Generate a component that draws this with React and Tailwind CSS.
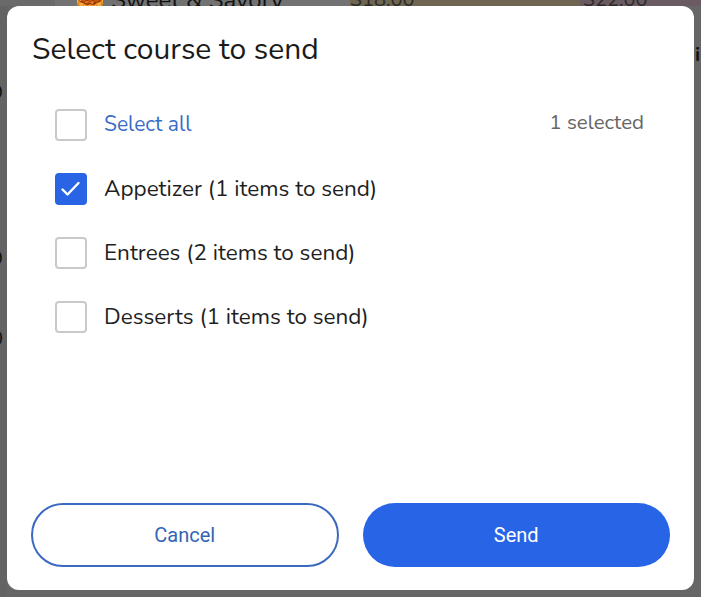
import React from "react";

const font = { fontFamily: "Nunito, 'Noto Sans', Lato, sans-serif" };

function Box({ checked }) {
  if (checked) {
    return (
      <div className="w-8 h-8 rounded-[4px] bg-[#2864e4] flex items-center justify-center shrink-0">
        <svg width="32" height="32" viewBox="0 0 32 32" fill="none">
          <path d="M7.5 16.5l5 5 11-11.5" stroke="white" strokeWidth="2.4" strokeLinecap="round" strokeLinejoin="round" />
        </svg>
      </div>
    );
  }
  return <div className="w-8 h-8 rounded-[4px] border-2 border-[#c9c9c9] bg-white shrink-0" />;
}

export default function App() {
  const rows = [
    { label: "Appetizer (1 items to send)", checked: true },
    { label: "Entrees (2 items to send)", checked: false },
    { label: "Desserts (1 items to send)", checked: false },
  ];
  const btnFont = { fontFamily: "'Liberation Sans Narrow', 'Roboto', sans-serif" };
  return (
    <div className="relative w-[701px] h-[597px] overflow-hidden bg-[#666666]" style={font}>
      {/* dimmed background app */}
      <div className="flex h-[6px] overflow-visible">
        <div className="w-[55px] bg-[#6a6a6a]" />
        <div className="w-[295px] bg-[#727272] relative">
          <span className="absolute left-[20px] -top-[18px] text-[24px] text-[#111] whitespace-nowrap">🥮 Sweet &amp; Savory</span>
        </div>
        <div className="w-[230px] bg-[#6e6650] relative">
          <span className="absolute left-[0px] -top-[15px] text-[20px] text-[#2a2a2a]">$18.00</span>
        </div>
        <div className="flex-1 bg-[#6a5a62] relative">
          <span className="absolute left-[3px] -top-[15px] text-[20px] text-[#2a2a2a]">$22.00</span>
        </div>
      </div>
      <div className="absolute left-0 top-[6px] bottom-0 w-[7px] bg-[#636363]">
        <span className="absolute -left-[9px] top-[72px] text-[20px] text-[#111]">9</span>
        <span className="absolute -left-[9px] top-[238px] text-[20px] text-[#111]">9</span>
        <span className="absolute -left-[9px] top-[318px] text-[20px] text-[#111]">0</span>
      </div>
      <div className="absolute right-0 top-[6px] bottom-0 w-[7px] bg-[#666666]">
        <span className="absolute left-[1px] top-[34px] text-[20px] font-bold text-[#111]">i</span>
      </div>

      {/* modal */}
      <div className="absolute left-[7px] top-[6px] w-[687px] h-[584px] bg-white rounded-[12px] flex flex-col px-6 pt-[24px] pb-[23px]">
        <h1 className="text-[30px] leading-[40px] text-[#1a1a1a] ml-[1px]">Select course to send</h1>
        <div className="mt-[23px] flex flex-col pl-[24px] pr-[26px]">
          <div className="flex items-center h-[64px]">
            <Box checked={false} />
            <span className="ml-[17px] text-[21px] text-[#3a6cc6]">Select all</span>
            <span className="ml-auto text-[20.5px] text-[#666] -mt-[5px]">1 selected</span>
          </div>
          {rows.map((r) => (
            <div key={r.label} className="flex items-center h-[64px]">
              <Box checked={r.checked} />
              <span className="ml-[17px] text-[22.5px] text-[#1f1f1f]">{r.label}</span>
            </div>
          ))}
        </div>
        <div className="mt-auto grid grid-cols-2 gap-6">
          <button className="h-[64px] rounded-full border-2 border-[#3a69bf] text-[#3563b6] text-[20px]" style={btnFont}>
            Cancel
          </button>
          <button className="h-[64px] rounded-full bg-[#2865e6] text-white text-[20px]" style={btnFont}>
            Send
          </button>
        </div>
      </div>
    </div>
  );
}
